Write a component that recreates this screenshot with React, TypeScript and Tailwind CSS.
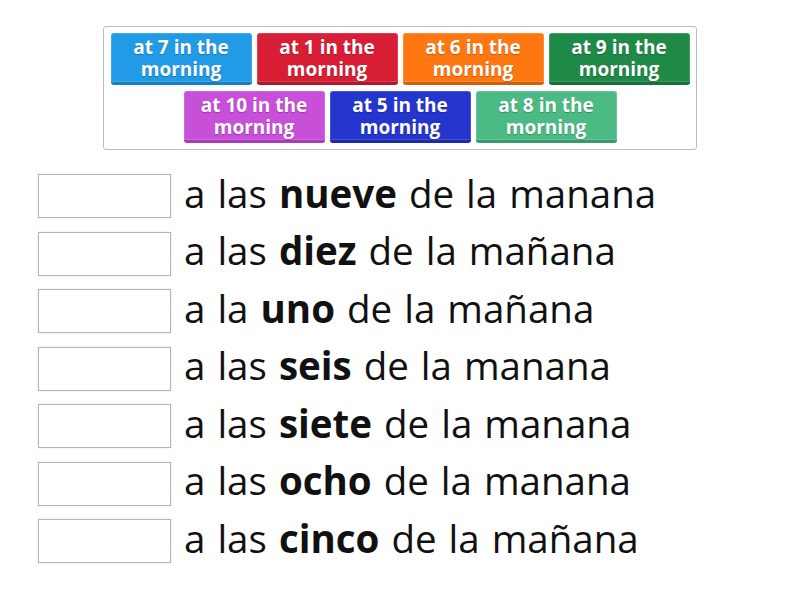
const TILES = [
  { label: "at 7 in the morning", bg: "bg-[#219be6]", edge: "border-[#1a7fc0]" },
  { label: "at 1 in the morning", bg: "bg-[#d81e35]", edge: "border-[#b0182b]" },
  { label: "at 6 in the morning", bg: "bg-[#ff7710]", edge: "border-[#d2600b]" },
  { label: "at 9 in the morning", bg: "bg-[#1f8a47]", edge: "border-[#17703a]" },
  { label: "at 10 in the morning", bg: "bg-[#c84fd8]", edge: "border-[#a83bb8]" },
  { label: "at 5 in the morning", bg: "bg-[#2536cf]", edge: "border-[#1c2aa8]" },
  { label: "at 8 in the morning", bg: "bg-[#4cba84]", edge: "border-[#3b9a6b]" },
];

const ROWS = [
  { pre: "a las", bold: "nueve", post: "de la manana" },
  { pre: "a las", bold: "diez", post: "de la mañana" },
  { pre: "a la", bold: "uno", post: "de la mañana" },
  { pre: "a las", bold: "seis", post: "de la manana" },
  { pre: "a las", bold: "siete", post: "de la manana" },
  { pre: "a las", bold: "ocho", post: "de la manana" },
  { pre: "a las", bold: "cinco", post: "de la mañana" },
];

function Tile({ label, bg, edge }: { label: string; bg: string; edge: string }) {
  return (
    <div
      className={`w-[141px] h-[52px] px-[6px] rounded-[3px] ${bg} border-b-[3px] ${edge} flex items-center justify-center text-center text-white font-bold text-[19px] leading-[22px] shadow-[inset_0_0_0_1px_rgba(255,255,255,0.15)] [text-shadow:0_1px_1px_rgba(0,0,0,0.25)]`}
    >
      <p>{label}</p>
    </div>
  );
}

export default function App() {
  return (
    <div className="w-[800px] h-[600px] bg-white font-['Open_Sans',sans-serif] text-[#111] overflow-hidden">
      <div className="pt-[26px] flex justify-center">
        <div className="w-[594px] border border-[#bdbdbd] rounded-[3px] p-[6px] flex flex-wrap justify-center gap-x-[5px] gap-y-[6px]">
          {TILES.map((t) => (
            <Tile key={t.label} {...t} />
          ))}
        </div>
      </div>

      <div className="mt-[24px] pl-[38px] flex flex-col gap-[13.5px]">
        {ROWS.map((r) => (
          <div key={r.bold} className="flex items-center h-[44px]">
            <div className="w-[133px] h-[44px] border border-[#b5b5b5] bg-white shadow-[0_0_2px_rgba(0,0,0,0.12)] shrink-0" />
            <div className="ml-[13px] mb-[6px] text-[38.5px] leading-none whitespace-nowrap [word-spacing:2px]">
              {r.pre} <span className="font-bold">{r.bold}</span> {r.post}
            </div>
          </div>
        ))}
      </div>
    </div>
  );
}
